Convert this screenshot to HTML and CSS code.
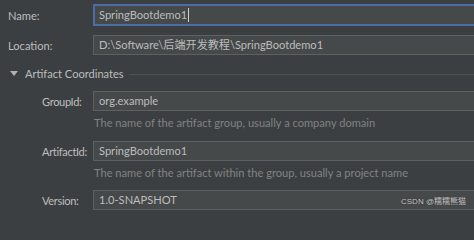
FILE: index.html
```html
<!DOCTYPE html>
<html>
<head>
<meta charset="utf-8">
<link rel="stylesheet" href="styles.css">
</head>
<body>
<div class="form">
  <div class="row row-name">
    <label class="lbl">Name:</label>
    <div class="field focus">SpringBootdemo1<span class="caret"></span></div>
  </div>
  <div class="row row-loc">
    <label class="lbl">Location:</label>
    <div class="field">D:\Software\后端开发教程\SpringBootdemo1</div>
  </div>
  <div class="section">
    <span class="tri"></span>
    <span class="sec-title">Artifact Coordinates</span>
    <span class="sep"></span>
  </div>
  <div class="row sub row-group">
    <label class="lbl">GroupId:</label>
    <div class="field">org.example</div>
  </div>
  <div class="hint">The name of the artifact group, usually a company domain</div>
  <div class="row sub row-art">
    <label class="lbl">ArtifactId:</label>
    <div class="field">SpringBootdemo1</div>
  </div>
  <div class="hint">The name of the artifact within the group, usually a project name</div>
  <div class="row sub row-ver">
    <label class="lbl">Version:</label>
    <div class="field">1.0-SNAPSHOT</div>
  </div>
</div>
<div class="watermark">CSDN @糯糯熊猫</div>
</body>
</html>
```

FILE: styles.css
```css
html, body {
  margin: 0;
  padding: 0;
  background: #3c3f41;
  width: 474px;
  height: 215px;
  overflow: hidden;
}
body {
  font-family: "Lato", "Noto Sans CJK SC", sans-serif;
  font-size: 11.1px;
  color: #bdbdbd;
  position: relative;
}
.form {
  display: flex;
  flex-direction: column;
  padding-top: 4px;
}
.row {
  display: grid;
  grid-template-columns: 85px 1fr;
  align-items: center;
  padding-left: 8px;
}
.row.sub {
  grid-template-columns: 51px 1fr;
  padding-left: 42px;
}
.lbl {
  white-space: nowrap;
}
.row.sub .lbl {
  letter-spacing: -0.35px;
}
.field {
  height: 20px;
  box-sizing: border-box;
  border: 1px solid #5e6162;
  border-right: none;
  background: #45494a;
  padding-left: 5px;
  line-height: 18px;
  white-space: nowrap;
  overflow: hidden;
}
.field.focus {
  height: 22px;
  border: 2px solid #4d6ca6;
  border-right: none;
  line-height: 18px;
  padding-left: 4px;
}
.caret {
  display: inline-block;
  width: 1px;
  height: 14px;
  background: #cfcfcf;
  vertical-align: -3px;
  margin-left: 1px;
}
.row-loc { margin-top: 9px; }
.section {
  display: flex;
  align-items: center;
  margin-top: 10px;
  height: 16px;
  padding-left: 10px;
}
.tri {
  width: 0;
  height: 0;
  border-left: 4px solid transparent;
  border-right: 4px solid transparent;
  border-top: 5px solid #b0b0b0;
  margin-right: 7px;
}
.sec-title {
  white-space: nowrap;
}
.sep {
  flex: 1;
  height: 1px;
  background: #4f5254;
  margin-left: 5px;
  margin-top: 2px;
}
.row-group { margin-top: 10px; }
.hint {
  padding-left: 94px;
  color: #808384;
  height: 14px;
  line-height: 14px;
  margin-top: 5px;
  white-space: nowrap;
}
.row-art { margin-top: 11px; }
.row-ver { margin-top: 10px; }
.watermark {
  position: absolute;
  right: 8px;
  top: 195px;
  font-family: "Liberation Sans", "Noto Sans CJK SC", sans-serif;
  font-size: 8px;
  color: #c8c8c8;
  text-shadow: 0 0 1px #222;
  white-space: nowrap;
}
```
